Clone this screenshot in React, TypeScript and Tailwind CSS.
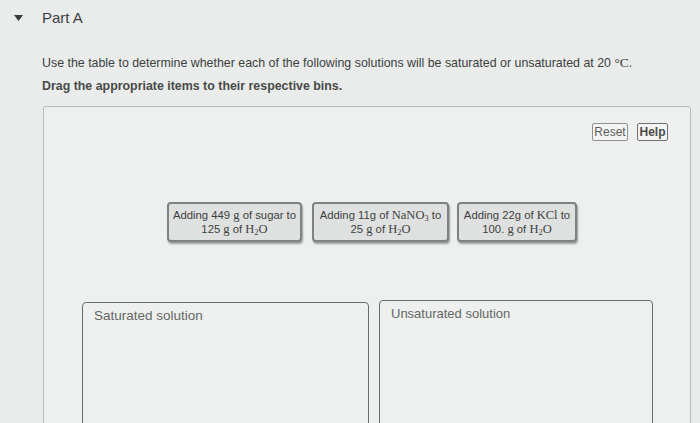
import React from 'react';

const serif = "font-['Liberation_Serif'] text-[12.5px]";

interface Item {
  id: number;
  width: string;
  line1: React.ReactNode;
  line2: React.ReactNode;
}

const items: Item[] = [
  {
    id: 1,
    width: 'w-[135px]',
    line1: (
      <>
        Adding 449 <span className={serif}>g</span> of sugar to
      </>
    ),
    line2: (
      <>
        125 <span className={serif}>g</span> of <span className={serif}>H<sub className="text-[8.5px]">2</sub>O</span>
      </>
    ),
  },
  {
    id: 2,
    width: 'w-[137px] ml-[10px]',
    line1: (
      <>
        Adding 11g of <span className={serif}>NaNO<sub className="text-[8.5px]">3</sub></span> to
      </>
    ),
    line2: (
      <>
        25 <span className={serif}>g</span> of <span className={serif}>H<sub className="text-[8.5px]">2</sub>O</span>
      </>
    ),
  },
  {
    id: 3,
    width: 'w-[120px] ml-[8px]',
    line1: (
      <>
        Adding 22g of <span className={serif}>KCl</span> to
      </>
    ),
    line2: (
      <>
        100. <span className={serif}>g</span> of <span className={serif}>H<sub className="text-[8.5px]">2</sub>O</span>
      </>
    ),
  },
];

const App: React.FC = () => {
  return (
    <div className="w-[700px] h-[423px] overflow-hidden bg-[#e9ecea] font-['Liberation_Sans',sans-serif] text-[#3d3f3e]">
      <div className="flex items-center h-[34px] pt-[2px]">
        <svg width="9" height="6" viewBox="0 0 9 6" className="ml-[14px] mr-[19px]">
          <path d="M0 0 L9 0 L4.5 6 Z" fill="#3a3c3b" />
        </svg>
        <span className="text-[15px]">Part A</span>
      </div>

      <div className="pl-[42px] pt-[17px] text-[12.4px]">
        <p className="leading-[23px]">
          Use the table to determine whether each of the following solutions will be saturated or unsaturated at 20{' '}
          <span className="font-['Liberation_Serif'] text-[13.5px]">°C</span>.
        </p>
        <p className="leading-[23px] font-bold text-[#484a49]">Drag the appropriate items to their respective bins.</p>
      </div>

      <div className="ml-[43px] mt-[8px] w-[648px] h-[330px] border border-[#b9bcba] rounded-[3px] bg-[#edf0ee]">
        <div className="flex justify-end gap-[9px] pr-[22px] pt-[16px]">
          <button className="h-[18px] w-[36px] border border-[#8f918f] rounded-[2px] bg-[#f3f4f3] text-[12px] text-[#5c5e5d] leading-none">
            Reset
          </button>
          <button className="h-[18px] w-[31px] border border-[#6f716f] rounded-[2px] bg-[#f3f4f3] text-[12px] font-bold text-[#4a4c4b] leading-none">
            Help
          </button>
        </div>

        <div className="flex pl-[123px] mt-[61px]">
          {items.map((item) => (
            <div
              key={item.id}
              className={`${item.width} h-[40px] flex flex-col items-center justify-center border-2 border-[#808281] rounded-[4px] bg-[#dfe1e0] shadow-[1px_2px_2px_rgba(0,0,0,0.35)] text-[11.3px] leading-[14px] text-[#3d3f3e] whitespace-nowrap`}
            >
              <div>{item.line1}</div>
              <div>{item.line2}</div>
            </div>
          ))}
        </div>

        <div className="flex gap-[10px] pl-[38px] mt-[60px]">
          <div className="w-[287px] h-[140px] border border-[#6b6d6c] rounded-[4px] px-[11px] pt-[0px]">
            <span className="text-[13.5px] text-[#656766]">Saturated solution</span>
          </div>
          <div className="w-[274px] h-[140px] border border-[#6b6d6c] rounded-[4px] px-[11px] pt-[0px] -mt-[2px]">
            <span className="text-[13px] text-[#656766]">Unsaturated solution</span>
          </div>
        </div>
      </div>
    </div>
  );
};

export default App;
